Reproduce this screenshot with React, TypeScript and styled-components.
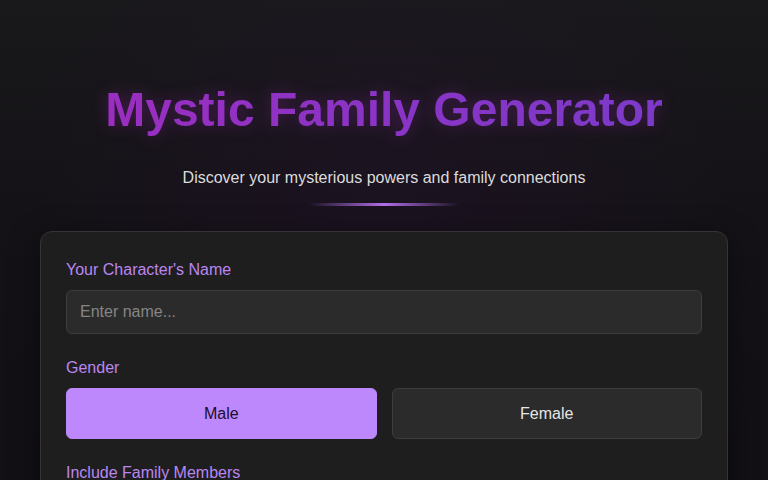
import React, { useState } from "react";
import styled, { createGlobalStyle } from "styled-components";

const GlobalStyle = createGlobalStyle`
  html, body {
    margin: 0;
    padding: 0;
    height: 100%;
  }
  body {
    background: #131215;
    font-family: "Liberation Sans", Arial, sans-serif;
    color: #e0e0e0;
    overflow: hidden;
  }
`;

const Page = styled.div`
  min-height: 480px;
  padding: 0 40px;
  background:
    radial-gradient(ellipse at 50% 40%, rgba(60, 20, 80, 0.18), transparent 70%),
    linear-gradient(180deg, #19181b 0%, #141216 40%, #120f15 100%);
`;

const Header = styled.header`
  display: flex;
  flex-direction: column;
  align-items: center;
  padding-top: 82px;
`;

const Title = styled.h1`
  margin: 0;
  font-size: 48px;
  font-weight: 700;
  line-height: 56px;
  background: linear-gradient(90deg, #9a2ec0 0%, #8a34c6 50%, #7c3ac8 100%);
  -webkit-background-clip: text;
  background-clip: text;
  color: transparent;
  filter: drop-shadow(0 0 8px rgba(156, 39, 176, 0.35));
`;

const Subtitle = styled.p`
  margin: 31px 0 0;
  font-size: 16px;
  line-height: 18px;
  color: #dcdcdc;
`;

const Divider = styled.div`
  width: 150px;
  height: 3px;
  margin-top: 16px;
  border-radius: 2px;
  background: linear-gradient(90deg, transparent, #b06ee8 50%, transparent);
`;

const Card = styled.section`
  margin-top: 25px;
  padding: 28px 25px;
  background: #1e1e1f;
  border: 1px solid #343336;
  border-radius: 12px;
  box-shadow: 0 8px 32px rgba(0, 0, 0, 0.45);
`;

const Field = styled.div`
  & + & {
    margin-top: 24px;
  }
`;

const Label = styled.label`
  display: block;
  font-size: 16px;
  line-height: 19px;
  color: #bb86f0;
  margin-bottom: 11px;
`;

const Input = styled.input`
  box-sizing: border-box;
  width: 100%;
  height: 44px;
  padding: 0 13px;
  background: #2b2b2c;
  border: 1px solid #3d3d3f;
  border-radius: 6px;
  font-family: inherit;
  font-size: 16px;
  color: #e0e0e0;
  outline: none;

  &::placeholder {
    color: #858585;
  }
`;

const ToggleRow = styled.div`
  display: grid;
  grid-template-columns: 1fr 1fr;
  gap: 15px;
`;

const Toggle = styled.button<{ $active: boolean }>`
  height: 51px;
  border-radius: 6px;
  font-family: inherit;
  font-size: 16px;
  cursor: pointer;
  border: 1px solid ${({ $active }) => ($active ? "#bc88fb" : "#3d3d3f")};
  background: ${({ $active }) => ($active ? "#bc88fb" : "#2b2b2c")};
  color: ${({ $active }) => ($active ? "#1b0c2c" : "#e6e6e6")};
`;

export default function App() {
  const [gender, setGender] = useState("male");
  return (
    <>
      <GlobalStyle />
      <Page>
        <Header>
          <Title>Mystic Family Generator</Title>
          <Subtitle>Discover your mysterious powers and family connections</Subtitle>
          <Divider />
        </Header>
        <Card>
          <Field>
            <Label htmlFor="name">Your Character's Name</Label>
            <Input id="name" placeholder="Enter name..." />
          </Field>
          <Field>
            <Label>Gender</Label>
            <ToggleRow>
              <Toggle $active={gender === "male"} onClick={() => setGender("male")}>Male</Toggle>
              <Toggle $active={gender === "female"} onClick={() => setGender("female")}>Female</Toggle>
            </ToggleRow>
          </Field>
          <Field>
            <Label>Include Family Members</Label>
          </Field>
        </Card>
      </Page>
    </>
  );
}
